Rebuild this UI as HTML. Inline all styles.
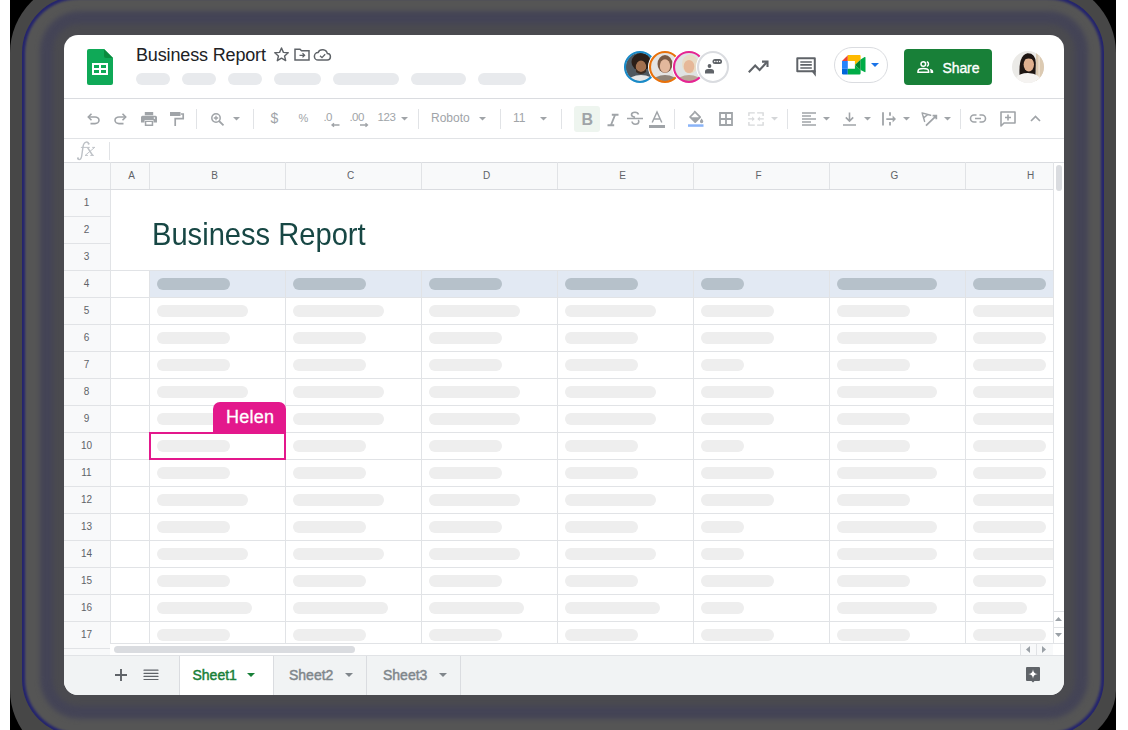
<!DOCTYPE html><html><head><meta charset="utf-8"><style>
*{margin:0;padding:0;box-sizing:border-box}
html,body{width:1128px;height:730px;overflow:hidden;background:#fff;font-family:"Liberation Sans",sans-serif}
.abs{position:absolute}
#bg{position:absolute;left:10px;top:0;width:1106px;height:730px;background:#000;overflow:hidden}
.sh{position:absolute}
#card{position:absolute;left:64px;top:35px;width:1000px;height:660px;background:#fff;border-radius:14px;overflow:hidden}
.pill{position:absolute;height:12px;border-radius:6px;background:#eeeeee}
.hp{background:#b6c1ca}
svg{position:absolute;overflow:visible}
</style></head><body>
<div id="bg">
<div class="sh" style="left:0;top:-19px;width:1106px;height:781px;border-radius:72px 72px 110px 72px / 72px 72px 72px 72px;background:#474747"></div>
<div class="sh" style="left:12px;top:-4px;width:1082px;height:740px;border-radius:57px;background:#24246e"></div>
<div class="sh" style="left:15px;top:-1px;width:1076px;height:734px;border-radius:54px;background:#555555;filter:blur(1px)"></div>
<div class="sh" style="left:30px;top:11px;width:1048px;height:708px;border-radius:40px;background:#444456;filter:blur(2.5px)"></div>
<div class="sh" style="left:43px;top:24px;width:1022px;height:682px;border-radius:26px;background:#4a4a4f;filter:blur(2.5px)"></div>
</div>
<div id="card">
<svg style="left:23px;top:14px;" width="26" height="36" viewBox="0 0 26 36"><path d="M2 0H17L26 9V34Q26 36 24 36H2Q0 36 0 34V2Q0 0 2 0Z" fill="#0fa957"/><path d="M17 0L26 9H19Q17 9 17 7Z" fill="#0a8a3e"/><rect x="5" y="14" width="16" height="12" fill="#fff"/><rect x="7" y="16" width="5" height="3" fill="#0fa957"/><rect x="14" y="16" width="5" height="3" fill="#0fa957"/><rect x="7" y="21" width="5" height="3" fill="#0fa957"/><rect x="14" y="21" width="5" height="3" fill="#0fa957"/></svg>
<div class="abs" style="left:72.00px;top:9.26px;font-size:18px;line-height:22px;white-space:nowrap;color:#202124;letter-spacing:-0.15px">Business Report</div>
<svg style="left:209px;top:11px;" width="17" height="17" viewBox="0 0 24 24"><path d="M12 2.8l2.7 6.2 6.8.6-5.2 4.5 1.6 6.6L12 17.2 6.1 20.7l1.6-6.6L2.5 9.6l6.8-.6z" fill="none" stroke="#5f6368" stroke-width="2" stroke-linejoin="round"/></svg>
<svg style="left:230px;top:13px;" width="16" height="13" viewBox="0 0 16 13"><path d="M1 1.2h5l1.5 1.5H15V12H1Z" fill="none" stroke="#5f6368" stroke-width="1.5"/><path d="M5.5 7.3h5M8.5 5.2l2.1 2.1-2.1 2.1" fill="none" stroke="#5f6368" stroke-width="1.3"/></svg>
<svg style="left:250px;top:13px;" width="17" height="13" viewBox="0 0 17 13"><path d="M4.2 12H13a3.2 3.2 0 0 0 .4-6.4A5 5 0 0 0 4 4.6a3.7 3.7 0 0 0 .2 7.4Z" fill="none" stroke="#5f6368" stroke-width="1.5"/><path d="M6 7.8l2 1.9 3.2-3.4" fill="none" stroke="#5f6368" stroke-width="1.3"/></svg>
<div class="abs" style="left:72px;top:38px;width:34px;height:12px;border-radius:6px;background:#e8eaed"></div>
<div class="abs" style="left:118px;top:38px;width:34px;height:12px;border-radius:6px;background:#e8eaed"></div>
<div class="abs" style="left:164px;top:38px;width:34px;height:12px;border-radius:6px;background:#e8eaed"></div>
<div class="abs" style="left:210px;top:38px;width:47px;height:12px;border-radius:6px;background:#e8eaed"></div>
<div class="abs" style="left:269px;top:38px;width:66px;height:12px;border-radius:6px;background:#e8eaed"></div>
<div class="abs" style="left:347px;top:38px;width:55px;height:12px;border-radius:6px;background:#e8eaed"></div>
<div class="abs" style="left:414px;top:38px;width:48px;height:12px;border-radius:6px;background:#e8eaed"></div>
<svg style="left:559px;top:15px;z-index:1" width="34" height="34" viewBox="-17 -17 34 34"><circle r="17" fill="#fff"/><clipPath id="c640"><circle r="14.2"/></clipPath><g clip-path="url(#c640)"><rect x="-16" y="-16" width="32" height="32" fill="#4f575e"/><ellipse cx="1" cy="-5" rx="9.5" ry="9" fill="#2b1e18"/><ellipse cx="1" cy="0" rx="5.2" ry="6.5" fill="#a2704f"/><path d="M-4 2Q1 8 6 2V5Q1 9 -4 5Z" fill="#3a2a20"/><ellipse cx="1" cy="15" rx="13" ry="7" fill="#e6e6e6"/></g><circle r="15" fill="none" stroke="#1a8ac7" stroke-width="2.1"/></svg>
<svg style="left:584px;top:15px;z-index:2" width="34" height="34" viewBox="-17 -17 34 34"><circle r="17" fill="#fff"/><clipPath id="c665"><circle r="14.2"/></clipPath><g clip-path="url(#c665)"><rect x="-16" y="-16" width="32" height="32" fill="#e4e4e2"/><ellipse cx="0" cy="-3" rx="7.5" ry="9" fill="#7a5a44"/><ellipse cx="0" cy="-1" rx="5.2" ry="6.8" fill="#e2b89c"/><ellipse cx="0" cy="15" rx="12" ry="7" fill="#8f8478"/></g><circle r="15" fill="none" stroke="#e8710a" stroke-width="2.1"/></svg>
<svg style="left:608px;top:15px;z-index:3" width="34" height="34" viewBox="-17 -17 34 34"><circle r="17" fill="#fff"/><clipPath id="c689"><circle r="14.2"/></clipPath><g clip-path="url(#c689)"><rect x="-16" y="-16" width="32" height="32" fill="#dfe3e3"/><ellipse cx="1" cy="-3" rx="8" ry="9.5" fill="#e8dcc6"/><ellipse cx="0" cy="-0.5" rx="5.3" ry="6.6" fill="#e6b898"/><ellipse cx="0" cy="15" rx="12" ry="7" fill="#b8a696"/></g><circle r="15" fill="none" stroke="#e52592" stroke-width="2.1"/></svg>
<svg style="left:632px;top:15px;z-index:4" width="34" height="34" viewBox="-17 -17 34 34"><circle r="17" fill="#fff"/><circle r="15" fill="#fff" stroke="#dadce0" stroke-width="2.1"/><circle cx="-3.5" cy="-1" r="1.9" fill="#5f6368"/><path d="M-8 6.5V4.5Q-8 2 -5 2H-2Q1 2 1 4.5V6.5Z" fill="#5f6368"/><rect x="-0.5" y="-8" width="9.5" height="5" rx="2.5" fill="#5f6368"/><circle cx="1.8" cy="-5.5" r=".8" fill="#fff"/><circle cx="4.2" cy="-5.5" r=".8" fill="#fff"/><circle cx="6.6" cy="-5.5" r=".8" fill="#fff"/></svg>
<svg style="left:684px;top:25px;" width="20" height="14" viewBox="0 0 20 14"><path d="M0.8 12.3L7.2 5.6 11.6 10 19 2" fill="none" stroke="#5f6368" stroke-width="2.1"/><path d="M14 1.6H19.5V7" fill="none" stroke="#5f6368" stroke-width="2.1"/></svg>
<svg style="left:732px;top:22px;" width="20" height="20" viewBox="0 0 20 20"><path d="M1.3 1.2H18.8V14.3H1.3Z" fill="none" stroke="#5f6368" stroke-width="2" stroke-linejoin="round"/><path d="M15 13.5H19.8V19.8Z" fill="#5f6368"/><path d="M4.3 5h11.5M4.3 7.9h11.5M4.3 11h11.5" stroke="#5f6368" stroke-width="1.6"/></svg>
<div class="abs" style="left:770px;top:12px;width:54px;height:36px;border:1px solid #dadce0;border-radius:18px"></div>
<svg style="left:778px;top:20px;" width="24" height="20" viewBox="0 0 24 20"><path d="M0 6L5.8 0.2V6Z" fill="#ea4335"/><path d="M5.8 0H17.6Q18.6 0 18.6 1.1V4.4L12.9 9.9V6H5.8Z" fill="#ffba00"/><path d="M0 6H5.8V13.7H0Z" fill="#2684fc"/><path d="M0 13.7H5.8V19.5H1.2Q0 19.5 0 18.3Z" fill="#0066da"/><path d="M5.8 13.7H12.9V9.9L18.6 15.1V18.3Q18.6 19.5 17.4 19.5H5.8Z" fill="#00ac47"/><path d="M12.9 9.9L18.6 4.4V15.1Z" fill="#00832d"/><path d="M18.6 4.4L22.6 2Q23.5 1.6 23.5 2.7V16.4Q23.5 17.5 22.6 17L18.6 15.1Z" fill="#00ac47"/></svg>
<svg style="left:807px;top:28px;" width="8" height="4" viewBox="0 0 8 4"><path d="M0 0H8L4 4Z" fill="#1a73e8"/></svg>
<div class="abs" style="left:840px;top:14px;width:88px;height:36px;background:#188038;border-radius:4px"></div>
<svg style="left:852.5px;top:26px;" width="17" height="13" viewBox="0 0 17 13"><circle cx="6.3" cy="3" r="2.3" fill="none" stroke="#fff" stroke-width="1.5"/><path d="M1 11.3V10.2C1 8.4 3.8 7.5 6.3 7.5S11.6 8.4 11.6 10.2V11.3Z" fill="none" stroke="#fff" stroke-width="1.5"/><path d="M9.8 0.8a2.4 2.4 0 0 1 0 4.6" fill="none" stroke="#fff" stroke-width="1.5"/><path d="M12.8 7.8C14.8 8.4 16.2 9.2 16.2 10.5V12H13.5V10.5Q13.5 9 12.8 7.8Z" fill="#fff"/></svg>
<div class="abs" style="left:878.50px;top:24.65px;font-size:14px;line-height:17px;white-space:nowrap;color:#fff;-webkit-text-stroke:0.35px #fff;letter-spacing:-0.1px">Share</div>
<svg style="left:948px;top:16px;" width="32" height="32" viewBox="0 0 32 32"><clipPath id="pp"><circle cx="16" cy="16" r="16"/></clipPath><g clip-path="url(#pp)"><rect width="32" height="32" fill="#ebeae7"/><rect x="24" y="0" width="8" height="32" fill="#dccab2"/><rect x="26.5" y="0" width="1.2" height="32" fill="#f0e6d8"/><path d="M7.5 24Q6.5 4 15.5 2.2Q23.5 2 23.8 12L23.5 24Z" fill="#1e1512"/><ellipse cx="16.8" cy="13.6" rx="5.2" ry="7" fill="#dfb08f"/><path d="M10.5 9Q13 3.6 19 4.3Q22.5 5 23 10Q19 6.5 13.5 8Z" fill="#1e1512"/><path d="M2 32Q4 22 16 22Q28 22 30 32Z" fill="#f5f3f1"/></g></svg>
<div class="abs" style="left:0px;top:63px;width:1000px;height:1px;background:#dadce0"></div>
<svg style="left:23px;top:78px;" width="13" height="11" viewBox="0 0 13 11"><path d="M4.5 0.8L1.3 4l3.2 3.2" fill="none" stroke="#a0a4a8" stroke-width="1.6"/><path d="M1.3 4H8a4 3.3 0 0 1 0 6.6H3.5" fill="none" stroke="#a0a4a8" stroke-width="1.6"/></svg>
<svg style="left:50px;top:78px;" width="13" height="11" viewBox="0 0 13 11"><path d="M8.5 0.8l3.2 3.2-3.2 3.2" fill="none" stroke="#a0a4a8" stroke-width="1.6"/><path d="M11.7 4H5a4 3.3 0 0 0 0 6.6H9.5" fill="none" stroke="#a0a4a8" stroke-width="1.6"/></svg>
<svg style="left:77px;top:77px;" width="16" height="14" viewBox="0 0 16 14"><path d="M3.8 0H12.2V3.2H3.8Z" fill="#a0a4a8"/><path d="M1.5 3.8H14.5Q16 3.8 16 5.3V10.5H12.5V8.2H3.5V10.5H0V5.3Q0 3.8 1.5 3.8Z" fill="#a0a4a8"/><path d="M3.8 9H12.2V14H3.8Z" fill="#a0a4a8"/><path d="M5.3 10H10.7V12.5H5.3Z" fill="#fff"/><circle cx="13.4" cy="6.1" r=".8" fill="#fff"/></svg>
<svg style="left:106px;top:77px;" width="14" height="14" viewBox="0 0 14 14"><path d="M0 0H10.5V4H0Z" fill="#a0a4a8"/><path d="M10.8 2H13.2V6.6H5.2V14" fill="none" stroke="#a0a4a8" stroke-width="1.7"/></svg>
<div class="abs" style="left:132px;top:74px;width:1px;height:20px;background:#e1e3e6"></div>
<svg style="left:147px;top:78px;" width="13" height="12" viewBox="0 0 13 12"><circle cx="5" cy="5" r="4.2" fill="none" stroke="#a0a4a8" stroke-width="1.5"/><path d="M8 8l4.5 4.3" stroke="#a0a4a8" stroke-width="1.8"/><path d="M2.8 5h4.4M5 2.8v4.4" stroke="#a0a4a8" stroke-width="1.3"/></svg>
<svg style="left:168.5px;top:82px;" width="7" height="4" viewBox="0 0 7 4"><path d="M0 0H7L3.5 3.5Z" fill="#a0a4a8" opacity="1"/></svg>
<div class="abs" style="left:189px;top:74px;width:1px;height:20px;background:#e1e3e6"></div>
<div class="abs" style="left:206.50px;top:74.65px;font-size:14px;line-height:17px;white-space:nowrap;color:#a0a4a8">$</div>
<div class="abs" style="left:234.50px;top:77.09px;font-size:11px;line-height:13px;white-space:nowrap;color:#a0a4a8">%</div>
<div class="abs" style="left:259.50px;top:74.72px;font-size:11.5px;line-height:14px;white-space:nowrap;color:#a0a4a8;letter-spacing:-0.6px">.0</div>
<svg style="left:267px;top:88px;" width="8.5" height="4" viewBox="0 0 8.5 4"><path d="M8.5 2H1.5M3 0.3L1 2l2 1.7" fill="none" stroke="#a0a4a8" stroke-width="1.3"/></svg>
<div class="abs" style="left:285.50px;top:74.72px;font-size:11.5px;line-height:14px;white-space:nowrap;color:#a0a4a8;letter-spacing:-0.6px">.00</div>
<svg style="left:295.5px;top:88px;" width="8.5" height="4" viewBox="0 0 8.5 4"><path d="M0 2H7M5.5 0.3L7.5 2l-2 1.7" fill="none" stroke="#a0a4a8" stroke-width="1.3"/></svg>
<div class="abs" style="left:313.50px;top:74.72px;font-size:11.5px;line-height:14px;white-space:nowrap;color:#a0a4a8;letter-spacing:-0.4px">123</div>
<svg style="left:337px;top:82px;" width="7" height="4" viewBox="0 0 7 4"><path d="M0 0H7L3.5 3.5Z" fill="#a0a4a8" opacity="1"/></svg>
<div class="abs" style="left:354px;top:74px;width:1px;height:20px;background:#e1e3e6"></div>
<div class="abs" style="left:367.00px;top:76.34px;font-size:12px;line-height:14px;white-space:nowrap;color:#a0a4a8">Roboto</div>
<svg style="left:415px;top:82px;" width="7" height="4" viewBox="0 0 7 4"><path d="M0 0H7L3.5 3.5Z" fill="#a0a4a8" opacity="1"/></svg>
<div class="abs" style="left:436px;top:74px;width:1px;height:20px;background:#e1e3e6"></div>
<div class="abs" style="left:449.00px;top:76.34px;font-size:12px;line-height:14px;white-space:nowrap;color:#a0a4a8">11</div>
<svg style="left:476px;top:82px;" width="7" height="4" viewBox="0 0 7 4"><path d="M0 0H7L3.5 3.5Z" fill="#a0a4a8" opacity="1"/></svg>
<div class="abs" style="left:497px;top:74px;width:1px;height:20px;background:#e1e3e6"></div>
<div class="abs" style="left:510px;top:71px;width:26px;height:26px;border-radius:3px;background:#eef5ef"></div>
<div class="abs" style="left:517.50px;top:74.76px;font-size:16px;line-height:19px;white-space:nowrap;color:#a0a4a8;font-weight:bold">B</div>
<svg style="left:543px;top:78.5px;" width="12" height="12" viewBox="0 0 12 12"><path d="M4.8 0.8H11.5M0.5 11.2H7.2M8 1L4 11" fill="none" stroke="#a0a4a8" stroke-width="1.9"/></svg>
<svg style="left:563px;top:76px;" width="16" height="15" viewBox="0 0 16 15"><path d="M11.5 3.5Q11 1.2 8 1.2Q4.5 1.2 4.5 3.8Q4.5 5.6 8 6.4M5 10.5Q5.4 13.3 8.2 13.3Q11.8 13.3 11.8 10.6Q11.8 9.6 11.2 9" fill="none" stroke="#a0a4a8" stroke-width="1.6"/><path d="M0 7.6H16" stroke="#a0a4a8" stroke-width="1.5"/></svg>
<svg style="left:585px;top:76px;" width="16" height="17" viewBox="0 0 16 17"><path d="M3.2 11.5L8 1L12.8 11.5M4.8 8H11.2" fill="none" stroke="#a0a4a8" stroke-width="1.5"/><rect x="0" y="14" width="16" height="3" fill="#a0a4a8"/></svg>
<div class="abs" style="left:610px;top:74px;width:1px;height:20px;background:#e1e3e6"></div>
<svg style="left:624px;top:75px;" width="16" height="17" viewBox="0 0 16 17"><path d="M6.2 1.2l6 6-5 5-5.2-5.2 4.3-4.3" fill="none" stroke="#a0a4a8" stroke-width="1.7" stroke-linejoin="round"/><path d="M2.3 7.2H11.8L7.2 11.8Z" fill="#a0a4a8"/><path d="M13.6 8.6c0 0 1.7 2 1.7 3a1.7 1.7 0 0 1-3.4 0c0-1 1.7-3 1.7-3Z" fill="#a0a4a8"/><rect x="0" y="14.3" width="15.5" height="2.5" fill="#8ab4f8"/></svg>
<svg style="left:655px;top:77px;" width="14" height="14" viewBox="0 0 14 14"><path d="M1 1H13V13H1ZM7 1V13M1 7H13" fill="none" stroke="#a0a4a8" stroke-width="1.8"/></svg>
<svg style="left:684px;top:77px;" width="16" height="14" viewBox="0 0 16 14"><g opacity=".42"><path d="M0.9 3.9V0.9H6.8M0.9 10.1V13.1H6.8M9.1 0.9H15.1V3.9M9.1 13.1H15.1V10.1" fill="none" stroke="#a0a4a8" stroke-width="1.4"/><path d="M0.2 6.9H4.6M15.8 6.9H11.4" stroke="#a0a4a8" stroke-width="1.3"/><path d="M4.2 4.5L6.7 6.9 4.2 9.3ZM11.8 4.5L9.3 6.9 11.8 9.3Z" fill="#a0a4a8"/></g></svg>
<svg style="left:706.5px;top:82px;" width="7" height="4" viewBox="0 0 7 4"><path d="M0 0H7L3.5 3.5Z" fill="#a0a4a8" opacity="0.45"/></svg>
<div class="abs" style="left:723px;top:74px;width:1px;height:20px;background:#e1e3e6"></div>
<svg style="left:738px;top:77px;" width="14" height="14" viewBox="0 0 14 14"><path d="M0 1H14M0 4H9M0 7H14M0 10H9M0 13H14" stroke="#a0a4a8" stroke-width="1.5"/></svg>
<svg style="left:759px;top:82px;" width="7" height="4" viewBox="0 0 7 4"><path d="M0 0H7L3.5 3.5Z" fill="#a0a4a8" opacity="1"/></svg>
<svg style="left:779px;top:77px;" width="13" height="14" viewBox="0 0 13 14"><path d="M6.5 0.5V9M2.8 5.4l3.7 3.7 3.7-3.7M0 13H13" fill="none" stroke="#a0a4a8" stroke-width="1.6"/></svg>
<svg style="left:799.5px;top:82px;" width="7" height="4" viewBox="0 0 7 4"><path d="M0 0H7L3.5 3.5Z" fill="#a0a4a8" opacity="1"/></svg>
<svg style="left:818px;top:76px;" width="14" height="16" viewBox="0 0 14 16"><path d="M1 1.2V14.6M8 1.2V4.7M8 11.1V14.6M4.3 8.1H12.2" fill="none" stroke="#a0a4a8" stroke-width="1.8"/><path d="M10.6 4.6L14 8.1 10.6 11.6Z" fill="#a0a4a8"/></svg>
<svg style="left:839px;top:82px;" width="7" height="4" viewBox="0 0 7 4"><path d="M0 0H7L3.5 3.5Z" fill="#a0a4a8" opacity="1"/></svg>
<svg style="left:856px;top:75px;" width="18" height="17" viewBox="0 0 18 17"><path d="M2.1 2.9L4.6 11.4M2.1 2.9L10.6 5.3M3.9 7.6L7.8 4.5" fill="none" stroke="#a0a4a8" stroke-width="1.5" stroke-linecap="round"/><path d="M6 15.6L16.1 5.9M12.6 5.7H16.3V9.3" fill="none" stroke="#a0a4a8" stroke-width="1.8"/></svg>
<svg style="left:880px;top:82px;" width="7" height="4" viewBox="0 0 7 4"><path d="M0 0H7L3.5 3.5Z" fill="#a0a4a8" opacity="1"/></svg>
<div class="abs" style="left:896px;top:74px;width:1px;height:20px;background:#e1e3e6"></div>
<svg style="left:906px;top:79px;" width="16" height="9" viewBox="0 0 16 9"><path d="M6.5 1H4a3.5 3.5 0 0 0 0 7H6.5M9.5 1H12a3.5 3.5 0 0 1 0 7H9.5M5 4.5H11" fill="none" stroke="#a0a4a8" stroke-width="1.6"/></svg>
<svg style="left:936px;top:76px;" width="16" height="16" viewBox="0 0 16 16"><path d="M1 1H15V12H4L1 15Z" fill="none" stroke="#a0a4a8" stroke-width="1.6" stroke-linejoin="round"/><path d="M8 3.5V9.5M5 6.5H11" stroke="#a0a4a8" stroke-width="1.6"/></svg>
<svg style="left:966px;top:80px;" width="11" height="7" viewBox="0 0 11 7"><path d="M1 6L5.5 1.5 10 6" fill="none" stroke="#a0a4a8" stroke-width="1.7"/></svg>
<div class="abs" style="left:0px;top:103px;width:1000px;height:1px;background:#e1e3e6"></div>
<svg style="left:12px;top:106px;" width="20" height="20" viewBox="0 0 20 20"><g fill="none" stroke="#bdc1c6"><path d="M12.6 2.6C12.4 1.3 11.3 0.9 10.2 1.1C8.6 1.4 7.4 2.6 7 5.9L5.7 15C5.3 17.5 4.3 18.6 3.2 18.6C2.2 18.6 1.6 17.9 1.8 17" stroke-width="1.4"/><path d="M4.9 6.4H13.8M18.7 6.4L9.2 14.4M9 14.4H11.9M14.3 14.4H17.9M16.2 6.4H18.9" stroke-width="0.95"/><path d="M11.6 6.6L16.6 14.3" stroke-width="1.5"/></g><circle cx="12.6" cy="2.8" r="1" fill="#bdc1c6"/><circle cx="2" cy="17.2" r="1" fill="#bdc1c6"/></svg>
<div class="abs" style="left:45px;top:107px;width:1px;height:18px;background:#e1e3e6"></div>
<div class="abs" style="left:0px;top:127px;width:1000px;height:1px;background:#dadce0"></div>
<div class="abs" style="left:0px;top:128px;width:989px;height:26px;background:#f8f9fa"></div>
<div class="abs" style="left:0px;top:155px;width:46px;height:465px;background:#f8f9fa"></div>
<div class="abs" style="left:86px;top:236px;width:903px;height:26px;background:#e2e9f3"></div>
<div class="abs" style="left:46px;top:127px;width:1px;height:493px;background:#e1e3e6"></div>
<div class="abs" style="left:85px;top:127px;width:1px;height:27px;background:#e1e3e6"></div>
<div class="abs" style="left:85px;top:235px;width:1px;height:373px;background:#e1e3e6"></div>
<div class="abs" style="left:221px;top:127px;width:1px;height:27px;background:#e1e3e6"></div>
<div class="abs" style="left:221px;top:235px;width:1px;height:373px;background:#e1e3e6"></div>
<div class="abs" style="left:357px;top:127px;width:1px;height:27px;background:#e1e3e6"></div>
<div class="abs" style="left:357px;top:235px;width:1px;height:373px;background:#e1e3e6"></div>
<div class="abs" style="left:493px;top:127px;width:1px;height:27px;background:#e1e3e6"></div>
<div class="abs" style="left:493px;top:235px;width:1px;height:373px;background:#e1e3e6"></div>
<div class="abs" style="left:629px;top:127px;width:1px;height:27px;background:#e1e3e6"></div>
<div class="abs" style="left:629px;top:235px;width:1px;height:373px;background:#e1e3e6"></div>
<div class="abs" style="left:765px;top:127px;width:1px;height:27px;background:#e1e3e6"></div>
<div class="abs" style="left:765px;top:235px;width:1px;height:373px;background:#e1e3e6"></div>
<div class="abs" style="left:901px;top:127px;width:1px;height:27px;background:#e1e3e6"></div>
<div class="abs" style="left:901px;top:235px;width:1px;height:373px;background:#e1e3e6"></div>
<div class="abs" style="left:989px;top:127px;width:1px;height:481px;background:#e1e3e6"></div>
<div class="abs" style="left:0px;top:154px;width:989px;height:1px;background:#dadce0"></div>
<div class="abs" style="left:0px;top:181px;width:46px;height:1px;background:#e1e3e6"></div>
<div class="abs" style="left:0px;top:208px;width:46px;height:1px;background:#e1e3e6"></div>
<div class="abs" style="left:0px;top:235px;width:989px;height:1px;background:#e1e3e6"></div>
<div class="abs" style="left:0px;top:262px;width:989px;height:1px;background:#e1e3e6"></div>
<div class="abs" style="left:0px;top:289px;width:989px;height:1px;background:#e1e3e6"></div>
<div class="abs" style="left:0px;top:316px;width:989px;height:1px;background:#e1e3e6"></div>
<div class="abs" style="left:0px;top:343px;width:989px;height:1px;background:#e1e3e6"></div>
<div class="abs" style="left:0px;top:370px;width:989px;height:1px;background:#e1e3e6"></div>
<div class="abs" style="left:0px;top:397px;width:989px;height:1px;background:#e1e3e6"></div>
<div class="abs" style="left:0px;top:424px;width:989px;height:1px;background:#e1e3e6"></div>
<div class="abs" style="left:0px;top:451px;width:989px;height:1px;background:#e1e3e6"></div>
<div class="abs" style="left:0px;top:478px;width:989px;height:1px;background:#e1e3e6"></div>
<div class="abs" style="left:0px;top:505px;width:989px;height:1px;background:#e1e3e6"></div>
<div class="abs" style="left:0px;top:532px;width:989px;height:1px;background:#e1e3e6"></div>
<div class="abs" style="left:0px;top:559px;width:989px;height:1px;background:#e1e3e6"></div>
<div class="abs" style="left:0px;top:586px;width:989px;height:1px;background:#e1e3e6"></div>
<div class="abs" style="left:0px;top:613px;width:46px;height:1px;background:#e1e3e6"></div>
<div class="abs" style="left:46px;top:608px;width:943px;height:1px;background:#e1e3e6"></div>
<div class="abs" style="left:47.50px;width:40px;text-align:center;top:134.53px;font-size:10px;line-height:12px;white-space:nowrap;color:#5f6368">A</div>
<div class="abs" style="left:130.50px;width:40px;text-align:center;top:134.53px;font-size:10px;line-height:12px;white-space:nowrap;color:#5f6368">B</div>
<div class="abs" style="left:266.50px;width:40px;text-align:center;top:134.53px;font-size:10px;line-height:12px;white-space:nowrap;color:#5f6368">C</div>
<div class="abs" style="left:402.50px;width:40px;text-align:center;top:134.53px;font-size:10px;line-height:12px;white-space:nowrap;color:#5f6368">D</div>
<div class="abs" style="left:538.50px;width:40px;text-align:center;top:134.53px;font-size:10px;line-height:12px;white-space:nowrap;color:#5f6368">E</div>
<div class="abs" style="left:674.50px;width:40px;text-align:center;top:134.53px;font-size:10px;line-height:12px;white-space:nowrap;color:#5f6368">F</div>
<div class="abs" style="left:810.50px;width:40px;text-align:center;top:134.53px;font-size:10px;line-height:12px;white-space:nowrap;color:#5f6368">G</div>
<div class="abs" style="left:946.50px;width:40px;text-align:center;top:134.53px;font-size:10px;line-height:12px;white-space:nowrap;color:#5f6368">H</div>
<div class="abs" style="left:2.50px;width:40px;text-align:center;top:161.53px;font-size:10px;line-height:12px;white-space:nowrap;color:#5f6368">1</div>
<div class="abs" style="left:2.50px;width:40px;text-align:center;top:188.53px;font-size:10px;line-height:12px;white-space:nowrap;color:#5f6368">2</div>
<div class="abs" style="left:2.50px;width:40px;text-align:center;top:215.53px;font-size:10px;line-height:12px;white-space:nowrap;color:#5f6368">3</div>
<div class="abs" style="left:2.50px;width:40px;text-align:center;top:242.54px;font-size:10px;line-height:12px;white-space:nowrap;color:#5f6368">4</div>
<div class="abs" style="left:2.50px;width:40px;text-align:center;top:269.54px;font-size:10px;line-height:12px;white-space:nowrap;color:#5f6368">5</div>
<div class="abs" style="left:2.50px;width:40px;text-align:center;top:296.54px;font-size:10px;line-height:12px;white-space:nowrap;color:#5f6368">6</div>
<div class="abs" style="left:2.50px;width:40px;text-align:center;top:323.54px;font-size:10px;line-height:12px;white-space:nowrap;color:#5f6368">7</div>
<div class="abs" style="left:2.50px;width:40px;text-align:center;top:350.54px;font-size:10px;line-height:12px;white-space:nowrap;color:#5f6368">8</div>
<div class="abs" style="left:2.50px;width:40px;text-align:center;top:377.54px;font-size:10px;line-height:12px;white-space:nowrap;color:#5f6368">9</div>
<div class="abs" style="left:2.50px;width:40px;text-align:center;top:404.54px;font-size:10px;line-height:12px;white-space:nowrap;color:#5f6368">10</div>
<div class="abs" style="left:2.50px;width:40px;text-align:center;top:431.54px;font-size:10px;line-height:12px;white-space:nowrap;color:#5f6368">11</div>
<div class="abs" style="left:2.50px;width:40px;text-align:center;top:458.54px;font-size:10px;line-height:12px;white-space:nowrap;color:#5f6368">12</div>
<div class="abs" style="left:2.50px;width:40px;text-align:center;top:485.53px;font-size:10px;line-height:12px;white-space:nowrap;color:#5f6368">13</div>
<div class="abs" style="left:2.50px;width:40px;text-align:center;top:512.53px;font-size:10px;line-height:12px;white-space:nowrap;color:#5f6368">14</div>
<div class="abs" style="left:2.50px;width:40px;text-align:center;top:539.53px;font-size:10px;line-height:12px;white-space:nowrap;color:#5f6368">15</div>
<div class="abs" style="left:2.50px;width:40px;text-align:center;top:566.53px;font-size:10px;line-height:12px;white-space:nowrap;color:#5f6368">16</div>
<div class="abs" style="left:2.50px;width:40px;text-align:center;top:593.53px;font-size:10px;line-height:12px;white-space:nowrap;color:#5f6368">17</div>
<div class="abs" style="left:87.50px;top:179.91px;font-size:32px;line-height:38px;white-space:nowrap;color:#174744;transform:scaleX(0.91);transform-origin:0 0">Business Report</div>
<div class="abs" style="left:93px;top:243px;width:73px;height:12px;border-radius:6px;background:#b6c1ca"></div>
<div class="abs" style="left:229px;top:243px;width:73px;height:12px;border-radius:6px;background:#b6c1ca"></div>
<div class="abs" style="left:365px;top:243px;width:73px;height:12px;border-radius:6px;background:#b6c1ca"></div>
<div class="abs" style="left:501px;top:243px;width:73px;height:12px;border-radius:6px;background:#b6c1ca"></div>
<div class="abs" style="left:637px;top:243px;width:43px;height:12px;border-radius:6px;background:#b6c1ca"></div>
<div class="abs" style="left:773px;top:243px;width:100px;height:12px;border-radius:6px;background:#b6c1ca"></div>
<div class="abs" style="left:909px;top:243px;width:73px;height:12px;border-radius:6px;background:#b6c1ca"></div>
<div class="abs" style="left:93px;top:270px;width:91px;height:12px;border-radius:6px;background:#eeeeee"></div>
<div class="abs" style="left:229px;top:270px;width:91px;height:12px;border-radius:6px;background:#eeeeee"></div>
<div class="abs" style="left:365px;top:270px;width:91px;height:12px;border-radius:6px;background:#eeeeee"></div>
<div class="abs" style="left:501px;top:270px;width:91px;height:12px;border-radius:6px;background:#eeeeee"></div>
<div class="abs" style="left:637px;top:270px;width:73px;height:12px;border-radius:6px;background:#eeeeee"></div>
<div class="abs" style="left:773px;top:270px;width:73px;height:12px;border-radius:6px;background:#eeeeee"></div>
<div class="abs" style="left:909px;top:270px;width:80px;height:12px;border-radius:6px 0 0 6px;background:#eeeeee"></div>
<div class="abs" style="left:93px;top:297px;width:73px;height:12px;border-radius:6px;background:#eeeeee"></div>
<div class="abs" style="left:229px;top:297px;width:73px;height:12px;border-radius:6px;background:#eeeeee"></div>
<div class="abs" style="left:365px;top:297px;width:73px;height:12px;border-radius:6px;background:#eeeeee"></div>
<div class="abs" style="left:501px;top:297px;width:73px;height:12px;border-radius:6px;background:#eeeeee"></div>
<div class="abs" style="left:637px;top:297px;width:73px;height:12px;border-radius:6px;background:#eeeeee"></div>
<div class="abs" style="left:773px;top:297px;width:100px;height:12px;border-radius:6px;background:#eeeeee"></div>
<div class="abs" style="left:909px;top:297px;width:73px;height:12px;border-radius:6px;background:#eeeeee"></div>
<div class="abs" style="left:93px;top:324px;width:73px;height:12px;border-radius:6px;background:#eeeeee"></div>
<div class="abs" style="left:229px;top:324px;width:73px;height:12px;border-radius:6px;background:#eeeeee"></div>
<div class="abs" style="left:365px;top:324px;width:73px;height:12px;border-radius:6px;background:#eeeeee"></div>
<div class="abs" style="left:501px;top:324px;width:73px;height:12px;border-radius:6px;background:#eeeeee"></div>
<div class="abs" style="left:637px;top:324px;width:43px;height:12px;border-radius:6px;background:#eeeeee"></div>
<div class="abs" style="left:773px;top:324px;width:73px;height:12px;border-radius:6px;background:#eeeeee"></div>
<div class="abs" style="left:909px;top:324px;width:73px;height:12px;border-radius:6px;background:#eeeeee"></div>
<div class="abs" style="left:93px;top:351px;width:91px;height:12px;border-radius:6px;background:#eeeeee"></div>
<div class="abs" style="left:229px;top:351px;width:91px;height:12px;border-radius:6px;background:#eeeeee"></div>
<div class="abs" style="left:365px;top:351px;width:91px;height:12px;border-radius:6px;background:#eeeeee"></div>
<div class="abs" style="left:501px;top:351px;width:91px;height:12px;border-radius:6px;background:#eeeeee"></div>
<div class="abs" style="left:637px;top:351px;width:73px;height:12px;border-radius:6px;background:#eeeeee"></div>
<div class="abs" style="left:773px;top:351px;width:100px;height:12px;border-radius:6px;background:#eeeeee"></div>
<div class="abs" style="left:909px;top:351px;width:80px;height:12px;border-radius:6px 0 0 6px;background:#eeeeee"></div>
<div class="abs" style="left:93px;top:378px;width:91px;height:12px;border-radius:6px;background:#eeeeee"></div>
<div class="abs" style="left:229px;top:378px;width:91px;height:12px;border-radius:6px;background:#eeeeee"></div>
<div class="abs" style="left:365px;top:378px;width:91px;height:12px;border-radius:6px;background:#eeeeee"></div>
<div class="abs" style="left:501px;top:378px;width:91px;height:12px;border-radius:6px;background:#eeeeee"></div>
<div class="abs" style="left:637px;top:378px;width:73px;height:12px;border-radius:6px;background:#eeeeee"></div>
<div class="abs" style="left:773px;top:378px;width:73px;height:12px;border-radius:6px;background:#eeeeee"></div>
<div class="abs" style="left:909px;top:378px;width:80px;height:12px;border-radius:6px 0 0 6px;background:#eeeeee"></div>
<div class="abs" style="left:93px;top:405px;width:73px;height:12px;border-radius:6px;background:#eeeeee"></div>
<div class="abs" style="left:229px;top:405px;width:73px;height:12px;border-radius:6px;background:#eeeeee"></div>
<div class="abs" style="left:365px;top:405px;width:73px;height:12px;border-radius:6px;background:#eeeeee"></div>
<div class="abs" style="left:501px;top:405px;width:73px;height:12px;border-radius:6px;background:#eeeeee"></div>
<div class="abs" style="left:637px;top:405px;width:43px;height:12px;border-radius:6px;background:#eeeeee"></div>
<div class="abs" style="left:773px;top:405px;width:73px;height:12px;border-radius:6px;background:#eeeeee"></div>
<div class="abs" style="left:909px;top:405px;width:73px;height:12px;border-radius:6px;background:#eeeeee"></div>
<div class="abs" style="left:93px;top:432px;width:73px;height:12px;border-radius:6px;background:#eeeeee"></div>
<div class="abs" style="left:229px;top:432px;width:73px;height:12px;border-radius:6px;background:#eeeeee"></div>
<div class="abs" style="left:365px;top:432px;width:73px;height:12px;border-radius:6px;background:#eeeeee"></div>
<div class="abs" style="left:501px;top:432px;width:73px;height:12px;border-radius:6px;background:#eeeeee"></div>
<div class="abs" style="left:637px;top:432px;width:73px;height:12px;border-radius:6px;background:#eeeeee"></div>
<div class="abs" style="left:773px;top:432px;width:100px;height:12px;border-radius:6px;background:#eeeeee"></div>
<div class="abs" style="left:909px;top:432px;width:73px;height:12px;border-radius:6px;background:#eeeeee"></div>
<div class="abs" style="left:93px;top:459px;width:91px;height:12px;border-radius:6px;background:#eeeeee"></div>
<div class="abs" style="left:229px;top:459px;width:91px;height:12px;border-radius:6px;background:#eeeeee"></div>
<div class="abs" style="left:365px;top:459px;width:91px;height:12px;border-radius:6px;background:#eeeeee"></div>
<div class="abs" style="left:501px;top:459px;width:91px;height:12px;border-radius:6px;background:#eeeeee"></div>
<div class="abs" style="left:637px;top:459px;width:73px;height:12px;border-radius:6px;background:#eeeeee"></div>
<div class="abs" style="left:773px;top:459px;width:73px;height:12px;border-radius:6px;background:#eeeeee"></div>
<div class="abs" style="left:909px;top:459px;width:80px;height:12px;border-radius:6px 0 0 6px;background:#eeeeee"></div>
<div class="abs" style="left:93px;top:486px;width:73px;height:12px;border-radius:6px;background:#eeeeee"></div>
<div class="abs" style="left:229px;top:486px;width:73px;height:12px;border-radius:6px;background:#eeeeee"></div>
<div class="abs" style="left:365px;top:486px;width:73px;height:12px;border-radius:6px;background:#eeeeee"></div>
<div class="abs" style="left:501px;top:486px;width:73px;height:12px;border-radius:6px;background:#eeeeee"></div>
<div class="abs" style="left:637px;top:486px;width:43px;height:12px;border-radius:6px;background:#eeeeee"></div>
<div class="abs" style="left:773px;top:486px;width:100px;height:12px;border-radius:6px;background:#eeeeee"></div>
<div class="abs" style="left:909px;top:486px;width:73px;height:12px;border-radius:6px;background:#eeeeee"></div>
<div class="abs" style="left:93px;top:513px;width:91px;height:12px;border-radius:6px;background:#eeeeee"></div>
<div class="abs" style="left:229px;top:513px;width:91px;height:12px;border-radius:6px;background:#eeeeee"></div>
<div class="abs" style="left:365px;top:513px;width:91px;height:12px;border-radius:6px;background:#eeeeee"></div>
<div class="abs" style="left:501px;top:513px;width:91px;height:12px;border-radius:6px;background:#eeeeee"></div>
<div class="abs" style="left:637px;top:513px;width:43px;height:12px;border-radius:6px;background:#eeeeee"></div>
<div class="abs" style="left:773px;top:513px;width:100px;height:12px;border-radius:6px;background:#eeeeee"></div>
<div class="abs" style="left:909px;top:513px;width:80px;height:12px;border-radius:6px 0 0 6px;background:#eeeeee"></div>
<div class="abs" style="left:93px;top:540px;width:73px;height:12px;border-radius:6px;background:#eeeeee"></div>
<div class="abs" style="left:229px;top:540px;width:73px;height:12px;border-radius:6px;background:#eeeeee"></div>
<div class="abs" style="left:365px;top:540px;width:73px;height:12px;border-radius:6px;background:#eeeeee"></div>
<div class="abs" style="left:501px;top:540px;width:73px;height:12px;border-radius:6px;background:#eeeeee"></div>
<div class="abs" style="left:637px;top:540px;width:73px;height:12px;border-radius:6px;background:#eeeeee"></div>
<div class="abs" style="left:773px;top:540px;width:73px;height:12px;border-radius:6px;background:#eeeeee"></div>
<div class="abs" style="left:909px;top:540px;width:73px;height:12px;border-radius:6px;background:#eeeeee"></div>
<div class="abs" style="left:93px;top:567px;width:95px;height:12px;border-radius:6px;background:#eeeeee"></div>
<div class="abs" style="left:229px;top:567px;width:95px;height:12px;border-radius:6px;background:#eeeeee"></div>
<div class="abs" style="left:365px;top:567px;width:95px;height:12px;border-radius:6px;background:#eeeeee"></div>
<div class="abs" style="left:501px;top:567px;width:95px;height:12px;border-radius:6px;background:#eeeeee"></div>
<div class="abs" style="left:637px;top:567px;width:43px;height:12px;border-radius:6px;background:#eeeeee"></div>
<div class="abs" style="left:773px;top:567px;width:100px;height:12px;border-radius:6px;background:#eeeeee"></div>
<div class="abs" style="left:909px;top:567px;width:54px;height:12px;border-radius:6px;background:#eeeeee"></div>
<div class="abs" style="left:93px;top:594px;width:73px;height:12px;border-radius:6px;background:#eeeeee"></div>
<div class="abs" style="left:229px;top:594px;width:73px;height:12px;border-radius:6px;background:#eeeeee"></div>
<div class="abs" style="left:365px;top:594px;width:73px;height:12px;border-radius:6px;background:#eeeeee"></div>
<div class="abs" style="left:501px;top:594px;width:73px;height:12px;border-radius:6px;background:#eeeeee"></div>
<div class="abs" style="left:637px;top:594px;width:73px;height:12px;border-radius:6px;background:#eeeeee"></div>
<div class="abs" style="left:773px;top:594px;width:73px;height:12px;border-radius:6px;background:#eeeeee"></div>
<div class="abs" style="left:909px;top:594px;width:73px;height:12px;border-radius:6px;background:#eeeeee"></div>
<div class="abs" style="left:46px;top:609px;width:954px;height:11px;background:#fff"></div>
<div class="abs" style="left:990px;top:128px;width:10px;height:492px;background:#fff"></div>
<div class="abs" style="left:992px;top:130px;width:6px;height:26px;border-radius:3px;background:#dadce0"></div>
<div class="abs" style="left:989px;top:576px;width:11px;height:1px;background:#e1e3e6"></div>
<div class="abs" style="left:989px;top:592px;width:11px;height:1px;background:#e1e3e6"></div>
<svg style="left:991px;top:582px;" width="7" height="4" viewBox="0 0 7 4"><path d="M0 4H7L3.5 0Z" fill="#9aa0a6"/></svg>
<svg style="left:991px;top:598px;" width="7" height="4" viewBox="0 0 7 4"><path d="M0 0H7L3.5 4Z" fill="#9aa0a6"/></svg>
<div class="abs" style="left:989px;top:608px;width:11px;height:1px;background:#e1e3e6"></div>
<div class="abs" style="left:50px;top:611px;width:241px;height:7px;border-radius:4px;background:#dadce0"></div>
<div class="abs" style="left:956px;top:609px;width:1px;height:11px;background:#e1e3e6"></div>
<div class="abs" style="left:972px;top:609px;width:1px;height:11px;background:#e1e3e6"></div>
<div class="abs" style="left:957px;top:609px;width:15px;height:11px;background:#f8f9fa"></div>
<div class="abs" style="left:973px;top:609px;width:16px;height:11px;background:#f8f9fa"></div>
<svg style="left:962px;top:611px;" width="4" height="7" viewBox="0 0 4 7"><path d="M4 0V7L0 3.5Z" fill="#9aa0a6"/></svg>
<svg style="left:978px;top:611px;" width="4" height="7" viewBox="0 0 4 7"><path d="M0 0V7L4 3.5Z" fill="#9aa0a6"/></svg>
<div class="abs" style="left:85px;top:397px;width:137px;height:28px;border:2px solid #e3188c"></div>
<div class="abs" style="left:149px;top:367px;width:73px;height:32px;background:#e3188c;border-radius:7px 7px 0 0"></div>
<div class="abs" style="left:162.00px;top:370.76px;font-size:18px;line-height:22px;white-space:nowrap;color:#fff;-webkit-text-stroke:0.3px #fff;letter-spacing:0.25px">Helen</div>
<div class="abs" style="left:0px;top:620px;width:1000px;height:40px;background:#f1f3f4;border-top:1px solid #e1e3e6"></div>
<svg style="left:51px;top:634px;" width="12" height="12" viewBox="0 0 12 12"><path d="M6 0V12M0 6H12" stroke="#5f6368" stroke-width="1.9"/></svg>
<svg style="left:80px;top:634px;" width="14" height="12" viewBox="0 0 14 12"><path d="M0 1.2H14M0 4.3H14M0 7.4H14M0 10.5H14" stroke="#5f6368" stroke-width="1.2" stroke-linecap="round"/></svg>
<div class="abs" style="left:115px;top:621px;width:95px;height:39px;background:#fff;border-left:1px solid #dadce0;border-right:1px solid #dadce0"></div>
<div class="abs" style="left:128.50px;top:631.65px;font-size:14px;line-height:17px;white-space:nowrap;color:#188038;-webkit-text-stroke:0.45px #188038">Sheet1</div>
<svg style="left:183px;top:638px;" width="8" height="4" viewBox="0 0 8 4"><path d="M0 0H8L4 4Z" fill="#188038"/></svg>
<div class="abs" style="left:225.00px;top:631.65px;font-size:14px;line-height:17px;white-space:nowrap;color:#80868b;-webkit-text-stroke:0.45px #80868b">Sheet2</div>
<svg style="left:281px;top:638px;" width="8" height="4" viewBox="0 0 8 4"><path d="M0 0H8L4 4Z" fill="#80868b"/></svg>
<div class="abs" style="left:302px;top:621px;width:1px;height:39px;background:#dadce0"></div>
<div class="abs" style="left:319.00px;top:631.65px;font-size:14px;line-height:17px;white-space:nowrap;color:#80868b;-webkit-text-stroke:0.45px #80868b">Sheet3</div>
<svg style="left:375px;top:638px;" width="8" height="4" viewBox="0 0 8 4"><path d="M0 0H8L4 4Z" fill="#80868b"/></svg>
<div class="abs" style="left:396px;top:621px;width:1px;height:39px;background:#dadce0"></div>
<svg style="left:962px;top:632px;" width="14" height="15" viewBox="0 0 14 15"><path d="M1 0H13Q14 0 14 1V13Q14 14 13 14H8.5L7 15.5 5.5 14H1Q0 14 0 13V1Q0 0 1 0Z" fill="#5f6368"/><path d="M7 2.2Q7.3 6.7 11.8 7 7.3 7.3 7 11.8 6.7 7.3 2.2 7 6.7 6.7 7 2.2Z" fill="#fff"/></svg>
</div>
</body></html>
